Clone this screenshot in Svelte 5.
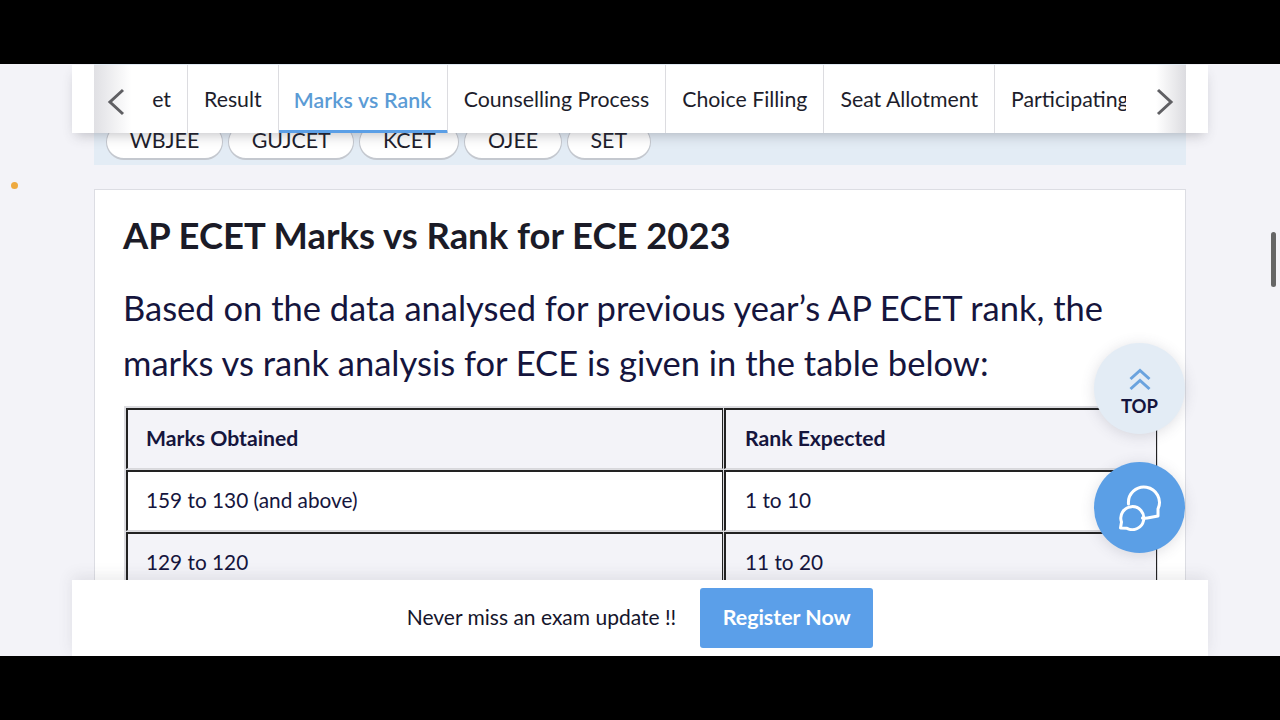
<script>
	const tabs = ['Result', 'Marks vs Rank', 'Counselling Process', 'Choice Filling', 'Seat Allotment', 'Participating'];
	const chips = ['WBJEE', 'GUJCET', 'KCET', 'OJEE', 'SET'];
	const rows = [
		['159 to 130 (and above)', '1 to 10'],
		['129 to 120', '11 to 20']
	];
</script>

<div class="screen">
	<div class="page">
		<div class="content">
			<div class="chips">
				{#each chips as chip}
					<span class="chip">{chip}</span>
				{/each}
			</div>

			<section class="card">
				<h2>AP ECET Marks vs Rank for ECE 2023</h2>
				<p>Based on the data analysed for previous year’s AP ECET rank, the marks vs rank analysis for ECE is given in the table below:</p>
				<table>
					<thead>
						<tr>
							<th>Marks Obtained</th>
							<th>Rank Expected</th>
						</tr>
					</thead>
					<tbody>
						{#each rows as row}
							<tr>
								<td>{row[0]}</td>
								<td>{row[1]}</td>
							</tr>
						{/each}
					</tbody>
				</table>
			</section>
		</div>

		<nav class="tabbar">
			<div class="tabs">
				<span class="tab clipped">et</span>
				{#each tabs as tab}
					<span class="tab" class:active={tab === 'Marks vs Rank'}>{tab}</span>
				{/each}
			</div>
			<div class="arrow left">
				<svg width="18" height="28" viewBox="0 0 18 28" fill="none" stroke="#5f5f63" stroke-width="3"><path d="M16 2 L3 14 L16 26" /></svg>
			</div>
			<div class="arrow right">
				<svg width="18" height="28" viewBox="0 0 18 28" fill="none" stroke="#5f5f63" stroke-width="3"><path d="M2 2 L15 14 L2 26" /></svg>
			</div>
		</nav>

		<span class="dot"></span>
		<span class="scrollbar"></span>

		<button class="fab top">
			<svg width="22" height="23" viewBox="0 0 22 23" fill="none" stroke="#6aa3de" stroke-width="3"><path d="M1.500 11 L11 2.500 L20.500 11 M1.500 21 L11 12.500 L20.500 21" /></svg>
			<span>TOP</span>
		</button>
		<button class="fab chat" aria-label="Chat">
			<svg width="46" height="46" viewBox="0 0 46 46" fill="none" stroke="#fff" stroke-width="3" stroke-linejoin="round" stroke-linecap="round">
				<path d="M11.500 19 A15.500 15.500 0 1 1 41 24 L41 31 L33 32.500 Q29 33.500 25.500 33" />
				<path d="M3.500 43 L4.500 37 A11.500 11.500 0 1 1 10 43.300 Z" />
			</svg>
		</button>

		<div class="cta">
			<span>Never miss an exam update !!</span>
			<button class="register">Register Now</button>
		</div>
	</div>
</div>

<style>
	:global(body) {
		margin: 0;
		background: #000;
	}

	.screen {
		width: 1280px;
		height: 720px;
		padding: 64px 0;
		box-sizing: border-box;
		background: #000;
		font-family: Lato, "Liberation Sans", sans-serif;
	}

	.page {
		position: relative;
		height: 592px;
		overflow: hidden;
		background: #f3f3f8;
	}

	.content {
		width: 1092px;
		margin: 0 auto;
	}

	.chips {
		display: flex;
		align-items: flex-end;
		gap: 5px;
		height: 101px;
		box-sizing: border-box;
		padding: 0 12px 5px;
		background: #e3ecf5;
	}

	.chip {
		display: flex;
		align-items: center;
		height: 36px;
		padding: 0 22.700px 4px;
		box-sizing: border-box;
		border: 1px solid #c4c8cf;
		border-bottom-width: 2px;
		border-radius: 18px;
		background: #fff;
		font-size: 21.400px;
		color: #1d1d2b;
	}

	.card {
		margin-top: 24px;
		height: 600px;
		padding: 0 28px;
		box-sizing: border-box;
		background: #fff;
		border: 1px solid #dcdde3;
	}

	h2 {
		margin: 22px 0 0;
		font-size: 36.400px;
		line-height: 46px;
		font-weight: 700;
		color: #1b1b27;
	}

	p {
		margin: 22px 0 0;
		font-size: 34.500px;
		line-height: 55px;
		color: #15153d;
	}

	table {
		margin: 16px 0 0 1px;
		width: 1034px;
		border-collapse: separate;
		border-spacing: 1px;
		border: 1px solid #dcdce0;
		border-right: none;
		background: #dcdce0;
		font-size: 20.800px;
		color: #15153d;
		table-layout: fixed;
	}

	th,
	td {
		height: 55px;
		padding: 0 18px 3px;
		text-align: left;
		background: #fff;
		border: 1px solid #222;
		border-width: 2px 1px 1px 2px;
		border-bottom-color: #d8d8dc;
	}

	th:first-child,
	td:first-child {
		width: 558px;
	}

	th {
		background: #f3f3f8;
		font-size: 21.200px;
		font-weight: 700;
	}

	td + td,
	th + th {
		padding-left: 19px;
	}

	tbody tr:nth-child(even) td {
		background: #f3f3f8;
	}

	.tabbar {
		position: absolute;
		top: 1px;
		left: 72px;
		width: 1136px;
		height: 68px;
		padding: 0 22px;
		box-sizing: border-box;
		background: #fff;
		box-shadow: 0 6px 12px -4px rgba(60, 60, 70, 0.3);
	}

	.tabs {
		display: flex;
		height: 100%;
		overflow: hidden;
	}

	.tab {
		flex: none;
		display: flex;
		align-items: center;
		height: 100%;
		padding: 0 16px;
		box-sizing: border-box;
		border-right: 1px solid #dcdce0;
		font-size: 21.300px;
		color: #1d1d2b;
	}

	.tab.clipped {
		width: 94px;
		justify-content: flex-end;
	}

	.tab.active {
		color: #5b9bd5;
		font-weight: 600;
		letter-spacing: 0.15px;
		padding-left: 15px;
		padding-right: 15px;
		padding-top: 5px;
		border-bottom: 5px solid #5b9fe6;
		height: 70px;
	}

	.arrow {
		position: absolute;
		top: 0;
		height: 68px;
		padding-top: 5px;
		box-sizing: border-box;
		display: flex;
		align-items: center;
	}

	.arrow.left {
		left: 22px;
		width: 44px;
		padding-left: 13px;
		background: linear-gradient(to right, #e0e0e4, #fff 85%, rgba(255, 255, 255, 0));
	}

	.arrow.right {
		right: 22px;
		width: 60px;
		padding-left: 30px;
		background: linear-gradient(to right, #fff, #fff 50%, #dcdce0);
	}

	.dot {
		position: absolute;
		left: 11px;
		top: 118px;
		width: 7px;
		height: 7px;
		border-radius: 50%;
		background: #eeaa40;
	}

	.scrollbar {
		position: absolute;
		left: 1271px;
		top: 168px;
		width: 5px;
		height: 55px;
		border-radius: 3px;
		background: #666;
	}

	.fab {
		position: absolute;
		left: 1094px;
		width: 91px;
		height: 91px;
		padding: 0;
		border: none;
		border-radius: 50%;
		display: flex;
		flex-direction: column;
		align-items: center;
		justify-content: center;
		font-family: inherit;
		box-shadow: 0 2px 14px rgba(80, 80, 100, 0.18);
	}

	.fab.top {
		top: 279px;
		gap: 4px;
		padding-top: 8px;
		box-sizing: border-box;
		background: #e3ecf5;
		font-size: 18.500px;
		font-weight: 700;
		color: #15153d;
		line-height: 22px;
	}

	.fab.chat {
		top: 398px;
		background: #5b9fe6;
	}

	.cta {
		position: absolute;
		left: 72px;
		bottom: 0;
		width: 1136px;
		height: 76px;
		display: flex;
		justify-content: center;
		align-items: center;
		gap: 24px;
		box-sizing: border-box;
		background: #fff;
		box-shadow: 0 -4px 14px rgba(60, 60, 70, 0.1);
		font-size: 21px;
		color: #15152b;
	}

	.cta span {
		margin-bottom: 3px;
	}

	.register {
		width: 173px;
		height: 60px;
		padding: 0 0 3px;
		border: none;
		border-radius: 3px;
		background: #5b9fe9;
		color: #fff;
		font-family: inherit;
		font-size: 21.400px;
		font-weight: 700;
	}
</style>
